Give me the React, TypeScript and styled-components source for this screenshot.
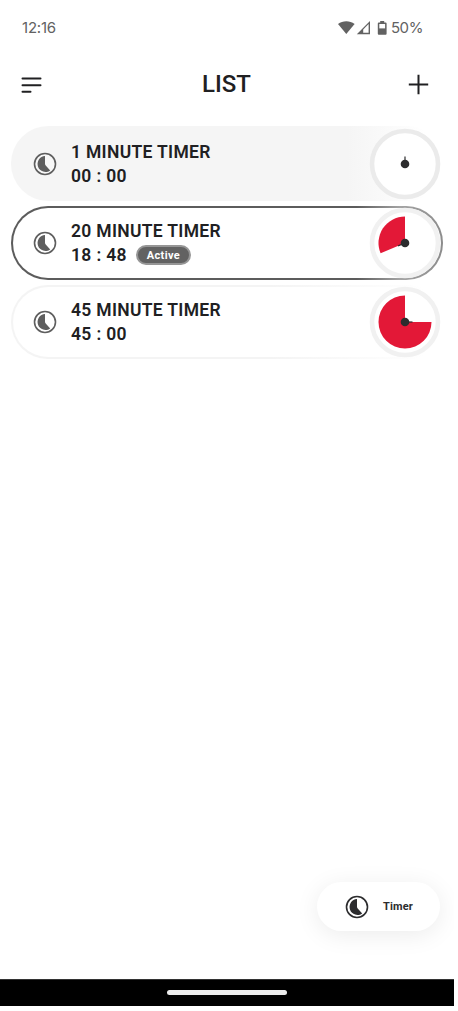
import React from 'react';
import styled, { createGlobalStyle } from 'styled-components';

const GlobalStyle = createGlobalStyle`
  * { box-sizing: border-box; }
  body { margin: 0; background: #fff; font-family: Roboto, sans-serif; color: #202022; }
`;

const Screen = styled.div`
  width: 454px;
  height: 1006px;
  display: flex;
  flex-direction: column;
  background: #fff;
  overflow: hidden;
`;

const StatusBar = styled.div`
  height: 55px;
  padding: 0 31px 0 22px;
  display: flex;
  align-items: center;
  justify-content: space-between;
  font: 400 15px/20px Inter, sans-serif;
  color: #626262;
`;

const Clock = styled.span`
  letter-spacing: -0.2px;
`;

const StatusIcons = styled.div`
  display: flex;
  align-items: center;
  svg { display: block; margin-right: 4px; }
`;

const Percent = styled.span`
  letter-spacing: -0.4px;
`;

const Header = styled.header`
  height: 59px;
  padding: 0 25px 0 21px;
  display: grid;
  grid-template-columns: 21px 1fr 21px;
  align-items: center;
  svg { display: block; }
`;

const Title = styled.h1`
  margin: 0;
  padding: 0 0 1px 3px;
  text-align: center;
  font-size: 24px;
  line-height: 28px;
  font-weight: 500;
  letter-spacing: 0;
`;

const List = styled.main`
  flex: 1;
  padding: 12.4px 11.3px 0;
  display: flex;
  flex-direction: column;
  gap: 5px;
`;

type Variant = 'filled' | 'active' | 'plain';

const outlines: Record<Variant, string> = {
  filled: 'linear-gradient(90deg, #f5f5f5 78%, #fff 96%)',
  active: 'linear-gradient(90deg, #5c5c5c 80%, #a4a4a4 90%, #8c8c8c 100%)',
  plain: 'linear-gradient(90deg, #f4f4f4 60%, #fff 96%)',
};

const fills: Record<Variant, string> = {
  filled: 'linear-gradient(90deg, #f5f5f5 78%, #fff 96%)',
  active: 'linear-gradient(#fff, #fff)',
  plain: 'linear-gradient(#fff, #fff)',
};

const Row = styled.section<{ $variant: Variant }>`
  height: 74.3px;
  border-radius: 38px;
  border: 2px solid transparent;
  padding: 0 0 0 19.3px;
  display: flex;
  align-items: center;
  background:
    ${p => fills[p.$variant]} ${p => (p.$variant === 'filled' ? 'border-box' : 'padding-box')},
    ${p => outlines[p.$variant]} border-box;
`;

const Label = styled.div`
  flex: 1;
  padding-left: 14.4px;
  font-size: 17.5px;
  line-height: 24px;
  font-weight: 600;
`;

const Name = styled.div`
  letter-spacing: 0.32px;
`;

const TimeLine = styled.div`
  display: flex;
  align-items: center;
  height: 24px;
  letter-spacing: 0.35px;
`;

const Badge = styled.span`
  height: 20px;
  width: 55px;
  margin-left: 9px;
  border: 2px solid #969696;
  border-radius: 10px;
  background: #626262;
  color: #fff;
  font-size: 11px;
  line-height: 17px;
  font-weight: 700;
  letter-spacing: 0.35px;
  text-align: center;
`;

const DialSvg = styled.svg`
  display: block;
  flex: none;
  margin: -1px 0 -1px;
`;

const BottomArea = styled.div`
  display: flex;
  justify-content: flex-end;
  padding: 0 14px 48px;
`;

const TimerButton = styled.button`
  width: 123px;
  height: 49px;
  padding: 1px 0 0 28px;
  border: 0;
  border-radius: 25px;
  background: #fff;
  box-shadow: 0 4px 24px rgba(0, 0, 0, 0.08);
  display: flex;
  align-items: center;
  gap: 14px;
  font: 700 11px/14px Roboto, sans-serif;
  letter-spacing: 0.15px;
  color: #2c2c2e;
`;

const NavBar = styled.footer`
  height: 27px;
  background: #000;
  border-top: 1px solid #333;
  display: flex;
  align-items: center;
  justify-content: center;
`;

const NavHandle = styled.div`
  width: 120px;
  height: 5px;
  margin-bottom: 1px;
  border-radius: 3px;
  background: #ececec;
`;

const IconSvg = styled.svg`
  display: block;
  flex: none;
`;

const polar = (c: number, r: number, deg: number) => {
  const a = (deg * Math.PI) / 180;
  return [c - r * Math.sin(a), c - r * Math.cos(a)];
};

function TimerIcon({ color, back = 'none' }: { color: string; back?: string }) {
  return (
    <IconSvg width="24" height="24" viewBox="0 0 24 24" fill="none">
      <circle cx="12" cy="12" r="10.5" fill={back} stroke={color} strokeWidth="1.6" />
      <path d="M12 4v7.8Q12 12.600 12.500 13.200L17.200 18.500A8 8 0 1 1 12 4Z" fill={color} />
    </IconSvg>
  );
}

function Dial({ degrees, ring }: { degrees: number; ring: string }) {
  const c = 36;
  const [x, y] = polar(c, 26.5, degrees);
  const [hx, hy] = polar(c, 7.5, degrees);
  return (
    <DialSvg width="72" height="72" viewBox="0 0 72 72">
      <circle cx={c} cy={c} r="33" fill="#fff" stroke={ring} strokeWidth="4.6" />
      {degrees > 0 && (
        <path
          d={`M${c} ${c}V${c - 26.5}A26.5 26.5 0 ${degrees > 180 ? 1 : 0} 0 ${x} ${y}Z`}
          fill="#e31837"
        />
      )}
      <path d={`M${c} ${c}L${hx} ${hy}`} stroke="#2c2c2e" strokeWidth="1.2" />
      <circle cx={c} cy={c} r="4.3" fill="#2c2c2e" />
    </DialSvg>
  );
}

interface Timer {
  name: string;
  time: string;
  degrees: number;
  variant: Variant;
}

const timers: Timer[] = [
  { name: '1 MINUTE TIMER', time: '00 : 00', degrees: 0, variant: 'filled' },
  { name: '20 MINUTE TIMER', time: '18 : 48', degrees: 112.8, variant: 'active' },
  { name: '45 MINUTE TIMER', time: '45 : 00', degrees: 270, variant: 'plain' },
];

export default function App() {
  return (
    <>
      <GlobalStyle />
      <Screen>
        <StatusBar>
          <Clock>12:16</Clock>
          <StatusIcons>
            <svg width="49" height="16" viewBox="0 0 49 16" fill="#626262">
              <path d="M0 4C4.8.2 11.8.2 16.6 4L8.3 14Z" />
              <path d="M18.8 14.2L32 1v13.2Z" />
              <path d="M25.2 9.4L30.6 4v8.8h-5.4Z" fill="#fff" />
              <path d="M42.2 1h4v1.5h1.4q1 0 1 1v10.2q0 1-1 1h-6.8q-1 0-1-1V3.5q0-1 1-1h1.4Z" />
              <path d="M41.3 4h5.800v4.400h-5.800Z" fill="#fff" />
            </svg>
            <Percent>50%</Percent>
          </StatusIcons>
        </StatusBar>
        <Header>
          <svg width="21" height="18" viewBox="0 0 21 18" stroke="#202022" strokeWidth="2" strokeLinecap="round">
            <path d="M1.5 2.5h18M1.5 9.200h18M1.5 15.700h8" />
          </svg>
          <Title>LIST</Title>
          <svg width="21" height="21" viewBox="0 0 21 21" stroke="#202022" strokeWidth="2">
            <path d="M10.5 .8v19.400M.8 10.5h19.400" />
          </svg>
        </Header>
        <List>
          {timers.map(t => (
            <Row key={t.name} $variant={t.variant}>
              <TimerIcon color="#5e5e5e" back={t.variant === 'filled' ? '#f8f8f8' : '#fff'} />
              <Label>
                <Name>{t.name}</Name>
                <TimeLine>
                  {t.time}
                  {t.variant === 'active' && <Badge>Active</Badge>}
                </TimeLine>
              </Label>
              <Dial degrees={t.degrees} ring={t.variant === 'filled' ? '#ebebeb' : '#f1f1f1'} />
            </Row>
          ))}
        </List>
        <BottomArea>
          <TimerButton>
            <TimerIcon color="#2c2c2e" />
            Timer
          </TimerButton>
        </BottomArea>
        <NavBar>
          <NavHandle />
        </NavBar>
      </Screen>
    </>
  );
}
